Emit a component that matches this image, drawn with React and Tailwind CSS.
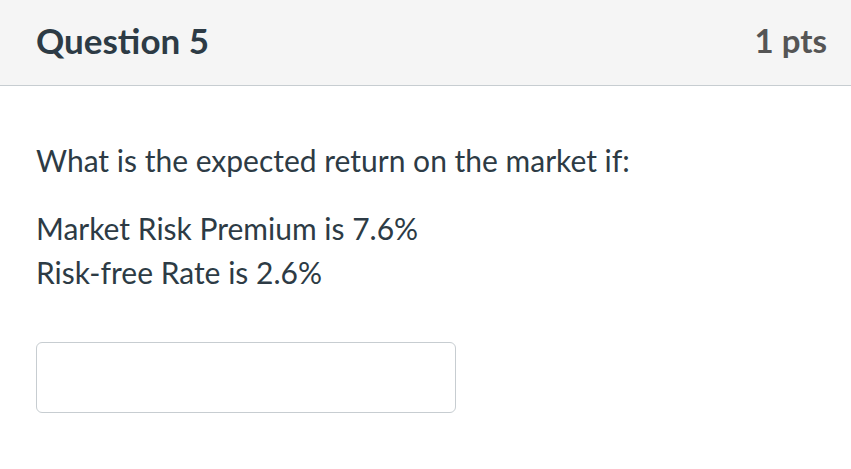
export default function App() {
  return (
    <div className="w-[851px] h-[469px] bg-white font-['Lato',sans-serif] text-[#2d3b45]">
      <div className="h-[86px] bg-[#f5f5f5] border-b border-[#c7cdd1] flex items-center justify-between pl-[36px] pr-[24px] pb-[4px]">
        <h2 className="text-[35px] font-bold leading-none text-[#2d3b45]">Question 5</h2>
        <div className="text-[33px] font-bold leading-none text-[#555]">1 pts</div>
      </div>
      <div className="px-[36px] pt-[52px]">
        <p className="text-[30px] leading-[44px]">What is the expected return on the market if:</p>
        <div className="mt-[24px] text-[30px] leading-[44px]">
          <p>Market Risk Premium is 7.6%</p>
          <p>Risk-free Rate is 2.6%</p>
        </div>
        <input
          type="text"
          className="mt-[48px] block w-[420px] h-[71px] border border-[#c7cdd1] rounded-[6px] bg-white"
        />
      </div>
    </div>
  );
}
